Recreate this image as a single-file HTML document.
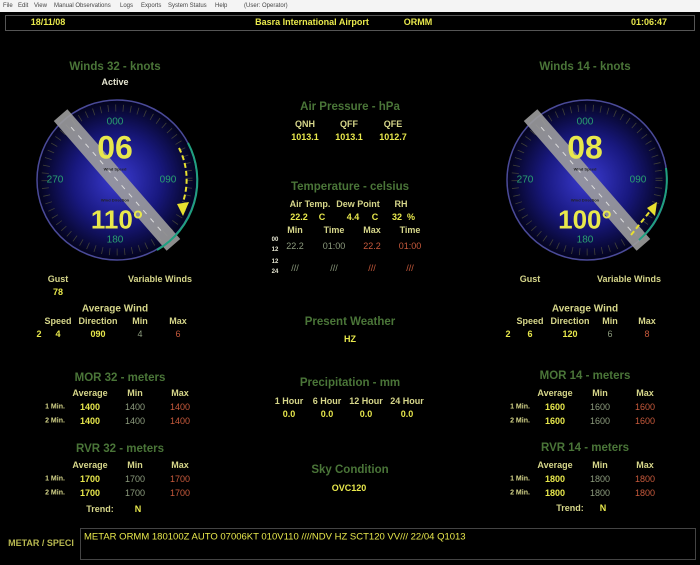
<!DOCTYPE html>
<html><head><meta charset="utf-8"><style>
body{margin:0;width:700px;height:565px;background:#000;overflow:hidden;position:relative;font-family:"Liberation Sans",Arial,sans-serif;font-weight:bold}
.t{position:absolute;transform:translate(-50%,-50%);white-space:nowrap;font-size:9px;color:#d6d68a}
.g{color:#4a7538;font-size:11.5px}
.y{color:#e8e84c}
.m{color:#8d9c7e;font-weight:normal}
.r{color:#c85a3c;font-weight:normal}
.w{color:#e6e6d2}
#menu{position:absolute;left:0;top:0;width:700px;height:12px;background:#f4f4f4;font-size:6px;color:#444;font-weight:normal}
#menu span{position:absolute;top:3px}
#hdr{position:absolute;left:5px;top:15px;width:688px;height:14px;border:1px solid #555;background:#000}
#mbox{position:absolute;left:80px;top:528px;width:614px;height:30px;border:1px solid #444}
</style></head><body>
<div id="menu"><span style="left:3px">File</span><span style="left:18px">Edit</span><span style="left:34px">View</span><span style="left:54px">Manual Observations</span><span style="left:120px">Logs</span><span style="left:141px">Exports</span><span style="left:168px">System Status</span><span style="left:215px">Help</span><span style="left:244px">(User: Operator)</span></div>
<div id="hdr"></div>
<div class="t y" style="left:48px;top:22px">18/11/08</div>
<div class="t y" style="left:312px;top:22px">Basra International Airport</div>
<div class="t y" style="left:418px;top:22px">ORMM</div>
<div class="t y" style="left:649px;top:22px">01:06:47</div>

<svg style="position:absolute;left:0;top:0" width="700" height="565">
<defs><radialGradient id="bg"><stop offset="0" stop-color="#3a3ad0"/><stop offset="0.55" stop-color="#18187e"/><stop offset="1" stop-color="#03031c"/></radialGradient></defs>
<g transform="translate(117,180)">
<circle r="80" fill="url(#bg)" stroke="#4a4a98" stroke-width="1.5"/>
<circle r="72" fill="none" stroke="#7a7a40" stroke-width="7" stroke-dasharray="0.8 6.7" opacity="0.5"/>
<g transform="rotate(-41)"><rect x="-9" y="-86" width="18" height="172" fill="#9c9c9c" opacity="0.9"/><line x1="0" y1="-70" x2="0" y2="70" stroke="#ddd" stroke-width="1" stroke-dasharray="5 6"/></g>
<path d="M71,-37 A80,80 0 0 1 40,70" fill="none" stroke="#20a080" stroke-width="2"/>
<path d="M62,-32 A70,70 0 0 1 66,22" fill="none" stroke="#e8e030" stroke-width="2" stroke-dasharray="5 3"/>
<polygon points="60,24 72,22 66,36" fill="#e8e030"/>
</g>
<g transform="translate(587,180)">
<circle r="80" fill="url(#bg)" stroke="#4a4a98" stroke-width="1.5"/>
<circle r="72" fill="none" stroke="#7a7a40" stroke-width="7" stroke-dasharray="0.8 6.7" opacity="0.5"/>
<g transform="rotate(-41)"><rect x="-9" y="-86" width="18" height="172" fill="#9c9c9c" opacity="0.9"/><line x1="0" y1="-70" x2="0" y2="70" stroke="#ddd" stroke-width="1" stroke-dasharray="5 6"/></g>
<path d="M79,-12 A80,80 0 0 1 52,60" fill="none" stroke="#20a080" stroke-width="2"/>
<path d="M44,55 L64,30" stroke="#e8e030" stroke-width="2" stroke-dasharray="5 3"/>
<polygon points="60,28 70,22 68,36" fill="#e8e030"/>
</g>
</svg>

<div class="t" style="left:115px;top:122px;color:#2aa070;font-size:10px;font-weight:normal">000</div>
<div class="t" style="left:55px;top:180px;color:#2aa070;font-size:10px;font-weight:normal">270</div>
<div class="t" style="left:168px;top:180px;color:#2aa070;font-size:10px;font-weight:normal">090</div>
<div class="t" style="left:115px;top:240px;color:#2aa070;font-size:10px;font-weight:normal">180</div>
<div class="t y" style="left:115px;top:148px;font-size:32px">06</div>
<div class="t" style="left:115px;top:169px;font-size:4px;color:#222">Wind Speed</div>
<div class="t" style="left:115px;top:200px;font-size:4px;color:#222">Wind Direction</div>
<div class="t y" style="left:117px;top:220px;font-size:26px">110°</div>
<div class="t" style="left:585px;top:122px;color:#2aa070;font-size:10px;font-weight:normal">000</div>
<div class="t" style="left:525px;top:180px;color:#2aa070;font-size:10px;font-weight:normal">270</div>
<div class="t" style="left:638px;top:180px;color:#2aa070;font-size:10px;font-weight:normal">090</div>
<div class="t" style="left:585px;top:240px;color:#2aa070;font-size:10px;font-weight:normal">180</div>
<div class="t y" style="left:585px;top:148px;font-size:32px">08</div>
<div class="t" style="left:585px;top:169px;font-size:4px;color:#222">Wind Speed</div>
<div class="t" style="left:585px;top:200px;font-size:4px;color:#222">Wind Direction</div>
<div class="t y" style="left:585px;top:220px;font-size:26px">100°</div>

<div class="t g" style="left:115px;top:67px">Winds 32 - knots</div>
<div class="t w" style="left:115px;top:82px">Active</div>
<div class="t" style="left:58px;top:279px">Gust</div>
<div class="t" style="left:160px;top:279px">Variable Winds</div>
<div class="t y" style="left:58px;top:292px">78</div>
<div class="t" style="left:115px;top:309px;font-size:10px">Average Wind</div>
<div class="t" style="left:58px;top:321px">Speed</div><div class="t" style="left:98px;top:321px">Direction</div><div class="t" style="left:140px;top:321px">Min</div><div class="t" style="left:178px;top:321px">Max</div>
<div class="t y" style="left:39px;top:334px">2</div><div class="t y" style="left:58px;top:334px">4</div><div class="t y" style="left:98px;top:334px">090</div><div class="t m" style="left:140px;top:334px">4</div><div class="t r" style="left:178px;top:334px">6</div>
<div class="t g" style="left:120px;top:378px">MOR 32 - meters</div>
<div class="t" style="left:90px;top:393px">Average</div><div class="t" style="left:135px;top:393px">Min</div><div class="t" style="left:180px;top:393px">Max</div>
<div class="t" style="left:55px;top:407px;font-size:7px">1 Min.</div><div class="t y" style="left:90px;top:407px">1400</div><div class="t m" style="left:135px;top:407px">1400</div><div class="t r" style="left:180px;top:407px">1400</div>
<div class="t" style="left:55px;top:421px;font-size:7px">2 Min.</div><div class="t y" style="left:90px;top:421px">1400</div><div class="t m" style="left:135px;top:421px">1400</div><div class="t r" style="left:180px;top:421px">1400</div>
<div class="t g" style="left:120px;top:449px">RVR 32 - meters</div>
<div class="t" style="left:90px;top:465px">Average</div><div class="t" style="left:135px;top:465px">Min</div><div class="t" style="left:180px;top:465px">Max</div>
<div class="t" style="left:55px;top:479px;font-size:7px">1 Min.</div><div class="t y" style="left:90px;top:479px">1700</div><div class="t m" style="left:135px;top:479px">1700</div><div class="t r" style="left:180px;top:479px">1700</div>
<div class="t" style="left:55px;top:493px;font-size:7px">2 Min.</div><div class="t y" style="left:90px;top:493px">1700</div><div class="t m" style="left:135px;top:493px">1700</div><div class="t r" style="left:180px;top:493px">1700</div>
<div class="t" style="left:100px;top:509px">Trend:</div><div class="t y" style="left:138px;top:509px">N</div>

<div class="t g" style="left:350px;top:107px">Air Pressure - hPa</div>
<div class="t" style="left:305px;top:124px">QNH</div><div class="t" style="left:349px;top:124px">QFF</div><div class="t" style="left:393px;top:124px">QFE</div>
<div class="t y" style="left:305px;top:137px">1013.1</div><div class="t y" style="left:349px;top:137px">1013.1</div><div class="t y" style="left:393px;top:137px">1012.7</div>
<div class="t g" style="left:350px;top:187px">Temperature - celsius</div>
<div class="t" style="left:310px;top:204px">Air Temp.</div><div class="t" style="left:358px;top:204px">Dew Point</div><div class="t" style="left:401px;top:204px">RH</div>
<div class="t y" style="left:299px;top:217px">22.2</div><div class="t y" style="left:322px;top:217px">C</div><div class="t y" style="left:353px;top:217px">4.4</div><div class="t y" style="left:375px;top:217px">C</div><div class="t y" style="left:397px;top:217px">32</div><div class="t y" style="left:411px;top:217px">%</div>
<div class="t" style="left:295px;top:230px">Min</div><div class="t" style="left:334px;top:230px">Time</div><div class="t" style="left:372px;top:230px">Max</div><div class="t" style="left:410px;top:230px">Time</div>
<div class="t w" style="left:275px;top:240px;font-size:6px">00</div><div class="t w" style="left:275px;top:250px;font-size:6px">12</div>
<div class="t w" style="left:275px;top:262px;font-size:6px">12</div><div class="t w" style="left:275px;top:272px;font-size:6px">24</div>
<div class="t m" style="left:295px;top:246px">22.2</div><div class="t m" style="left:334px;top:246px">01:00</div><div class="t r" style="left:372px;top:246px">22.2</div><div class="t r" style="left:410px;top:246px">01:00</div>
<div class="t m" style="left:295px;top:268px">///</div><div class="t m" style="left:334px;top:268px">///</div><div class="t r" style="left:372px;top:268px">///</div><div class="t r" style="left:410px;top:268px">///</div>
<div class="t g" style="left:350px;top:322px">Present Weather</div>
<div class="t y" style="left:350px;top:339px">HZ</div>
<div class="t g" style="left:350px;top:383px">Precipitation - mm</div>
<div class="t" style="left:289px;top:401px">1 Hour</div><div class="t" style="left:327px;top:401px">6 Hour</div><div class="t" style="left:366px;top:401px">12 Hour</div><div class="t" style="left:407px;top:401px">24 Hour</div>
<div class="t y" style="left:289px;top:414px">0.0</div><div class="t y" style="left:327px;top:414px">0.0</div><div class="t y" style="left:366px;top:414px">0.0</div><div class="t y" style="left:407px;top:414px">0.0</div>
<div class="t g" style="left:350px;top:470px">Sky Condition</div>
<div class="t y" style="left:349px;top:488px">OVC120</div>

<div class="t g" style="left:585px;top:67px">Winds 14 - knots</div>
<div class="t" style="left:530px;top:279px">Gust</div>
<div class="t" style="left:629px;top:279px">Variable Winds</div>
<div class="t" style="left:585px;top:309px;font-size:10px">Average Wind</div>
<div class="t" style="left:530px;top:321px">Speed</div><div class="t" style="left:570px;top:321px">Direction</div><div class="t" style="left:610px;top:321px">Min</div><div class="t" style="left:647px;top:321px">Max</div>
<div class="t y" style="left:508px;top:334px">2</div><div class="t y" style="left:530px;top:334px">6</div><div class="t y" style="left:570px;top:334px">120</div><div class="t m" style="left:610px;top:334px">6</div><div class="t r" style="left:647px;top:334px">8</div>
<div class="t g" style="left:585px;top:376px">MOR 14 - meters</div>
<div class="t" style="left:555px;top:393px">Average</div><div class="t" style="left:600px;top:393px">Min</div><div class="t" style="left:645px;top:393px">Max</div>
<div class="t" style="left:520px;top:407px;font-size:7px">1 Min.</div><div class="t y" style="left:555px;top:407px">1600</div><div class="t m" style="left:600px;top:407px">1600</div><div class="t r" style="left:645px;top:407px">1600</div>
<div class="t" style="left:520px;top:421px;font-size:7px">2 Min.</div><div class="t y" style="left:555px;top:421px">1600</div><div class="t m" style="left:600px;top:421px">1600</div><div class="t r" style="left:645px;top:421px">1600</div>
<div class="t g" style="left:585px;top:448px">RVR 14 - meters</div>
<div class="t" style="left:555px;top:465px">Average</div><div class="t" style="left:600px;top:465px">Min</div><div class="t" style="left:645px;top:465px">Max</div>
<div class="t" style="left:520px;top:479px;font-size:7px">1 Min.</div><div class="t y" style="left:555px;top:479px">1800</div><div class="t m" style="left:600px;top:479px">1800</div><div class="t r" style="left:645px;top:479px">1800</div>
<div class="t" style="left:520px;top:493px;font-size:7px">2 Min.</div><div class="t y" style="left:555px;top:493px">1800</div><div class="t m" style="left:600px;top:493px">1800</div><div class="t r" style="left:645px;top:493px">1800</div>
<div class="t" style="left:570px;top:508px">Trend:</div><div class="t y" style="left:603px;top:508px">N</div>

<div class="t" style="left:41px;top:543px;color:#b8b850;font-size:9px">METAR / SPECI</div>
<div id="mbox"></div>
<div class="t y" style="left:84px;top:537px;transform:translateY(-50%);font-weight:normal;font-size:9.5px">METAR ORMM 180100Z AUTO 07006KT 010V110 ////NDV HZ SCT120 VV/// 22/04 Q1013</div>
</body></html>
